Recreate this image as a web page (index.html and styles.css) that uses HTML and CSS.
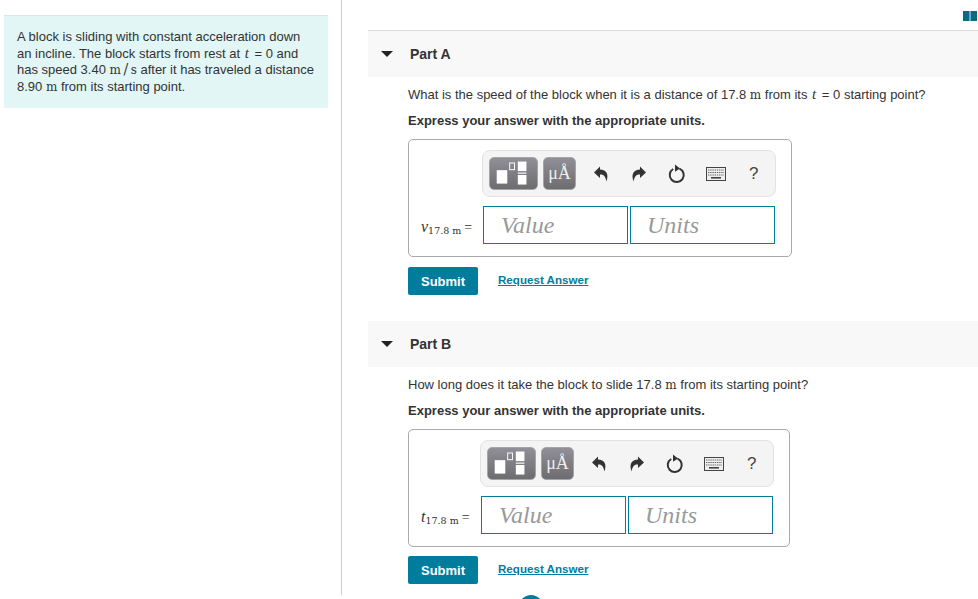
FILE: index.html
```html
<!DOCTYPE html>
<html lang="en">
<head>
  <meta charset="UTF-8">
  <title>Block on an incline</title>
  <link rel="stylesheet" href="styles.css">
</head>
<body>

  <div class="left">
    <div class="intro">
      A block is sliding with constant acceleration down an incline. The block starts from rest at <i class="var">t</i> <span class="eq">= 0</span> and has speed 3.40 <span class="unit">m<span class="slash">/</span>s</span> after it has traveled a distance 8.90 <span class="unit">m</span> from its starting point.
    </div>
  </div>

  <div class="right">
    <div class="topbar">
      <svg class="book" width="14" height="10" viewBox="0 0 14 10">
        <rect x="0" y="0" width="6" height="10" fill="#0b6a84"/>
        <rect x="8" y="0" width="6" height="10" fill="#0b6a84"/>
        <rect x="6" y="0" width="2" height="10" fill="#6fa9b9"/>
      </svg>
    </div>

    <div class="part-head part-head-first">
      <span class="caret"></span>
      <span class="part-title">Part A</span>
    </div>
    <div class="part-body">
      <p class="question">What is the speed of the block when it is a distance of 17.8 <span class="unit">m</span> from its <i class="var">t</i> <span class="eq">= 0</span> starting point?</p>
      <p class="express">Express your answer with the appropriate units.</p>

      <div class="answer-box">
        <div class="toolbar">
          <button class="tool-btn frac-btn">
            <svg width="49" height="32" viewBox="0 0 49 32">
              <rect x="7" y="12" width="11" height="14" fill="#fff"/>
              <rect x="20.5" y="4.5" width="5" height="7" fill="none" stroke="#fff"/>
              <rect x="29" y="3" width="9" height="10" fill="#fff"/>
              <rect x="29" y="14.5" width="9" height="1.2" fill="#fff"/>
              <rect x="29" y="17" width="9" height="10" fill="#fff"/>
            </svg>
          </button>
          <button class="tool-btn unit-btn">μÅ</button>
          <span class="tool">
            <svg width="16" height="16" viewBox="0 0 16 16"><path d="M7 0.5 L1 6.5 L7 12 V8.6 C10.2 8.4 12.5 10 13.5 15.5 C16 8 13.5 3.8 7 3.6 Z" fill="#333"/></svg>
          </span>
          <span class="tool">
            <svg class="flip" width="16" height="16" viewBox="0 0 16 16"><path d="M7 0.5 L1 6.5 L7 12 V8.6 C10.2 8.4 12.5 10 13.5 15.5 C16 8 13.5 3.8 7 3.6 Z" fill="#333"/></svg>
          </span>
          <span class="tool">
            <svg width="18" height="20" viewBox="0 0 18 20"><path d="M11.5 4.6 A7 7 0 1 1 5.2 5" fill="none" stroke="#333" stroke-width="2"/><path d="M7 0.6 L12 4.4 L7 7.8 Z" fill="#333"/></svg>
          </span>
          <span class="tool">
            <svg width="20" height="14" viewBox="0 0 20 14">
              <rect x="0.5" y="0.5" width="19" height="13" fill="#eee" stroke="#444"/>
              <path d="M2 3 H18 M2 5.5 H18 M2 8 H18" stroke="#666" stroke-width="1.2" stroke-dasharray="1.4 0.8"/>
              <rect x="5" y="10" width="10" height="1.6" fill="#444"/>
            </svg>
          </span>
          <span class="tool help">?</span>
        </div>
        <div class="answer-row">
          <span class="answer-label"><i>v</i><sub>17.8 m</sub>=</span>
          <input class="field field-value" placeholder="Value">
          <input class="field field-units" placeholder="Units">
        </div>
      </div>

      <div class="actions">
        <button class="submit">Submit</button>
        <a class="request" href="#">Request Answer</a>
      </div>
    </div>

    <div class="part-head">
      <span class="caret"></span>
      <span class="part-title">Part B</span>
    </div>
    <div class="part-body">
      <p class="question">How long does it take the block to slide 17.8 <span class="unit">m</span> from its starting point?</p>
      <p class="express">Express your answer with the appropriate units.</p>

      <div class="answer-box answer-box-b">
        <div class="toolbar">
          <button class="tool-btn frac-btn">
            <svg width="49" height="32" viewBox="0 0 49 32">
              <rect x="7" y="12" width="11" height="14" fill="#fff"/>
              <rect x="20.5" y="4.5" width="5" height="7" fill="none" stroke="#fff"/>
              <rect x="29" y="3" width="9" height="10" fill="#fff"/>
              <rect x="29" y="14.5" width="9" height="1.2" fill="#fff"/>
              <rect x="29" y="17" width="9" height="10" fill="#fff"/>
            </svg>
          </button>
          <button class="tool-btn unit-btn">μÅ</button>
          <span class="tool">
            <svg width="16" height="16" viewBox="0 0 16 16"><path d="M7 0.5 L1 6.5 L7 12 V8.6 C10.2 8.4 12.5 10 13.5 15.5 C16 8 13.5 3.8 7 3.6 Z" fill="#333"/></svg>
          </span>
          <span class="tool">
            <svg class="flip" width="16" height="16" viewBox="0 0 16 16"><path d="M7 0.5 L1 6.5 L7 12 V8.6 C10.2 8.4 12.5 10 13.5 15.5 C16 8 13.5 3.8 7 3.6 Z" fill="#333"/></svg>
          </span>
          <span class="tool">
            <svg width="18" height="20" viewBox="0 0 18 20"><path d="M11.5 4.6 A7 7 0 1 1 5.2 5" fill="none" stroke="#333" stroke-width="2"/><path d="M7 0.6 L12 4.4 L7 7.8 Z" fill="#333"/></svg>
          </span>
          <span class="tool">
            <svg width="20" height="14" viewBox="0 0 20 14">
              <rect x="0.5" y="0.5" width="19" height="13" fill="#eee" stroke="#444"/>
              <path d="M2 3 H18 M2 5.5 H18 M2 8 H18" stroke="#666" stroke-width="1.2" stroke-dasharray="1.4 0.8"/>
              <rect x="5" y="10" width="10" height="1.6" fill="#444"/>
            </svg>
          </span>
          <span class="tool help">?</span>
        </div>
        <div class="answer-row">
          <span class="answer-label"><i>t</i><sub>17.8 m</sub>=</span>
          <input class="field field-value" placeholder="Value">
          <input class="field field-units" placeholder="Units">
        </div>
      </div>

      <div class="actions actions-b">
        <button class="submit">Submit</button>
        <a class="request" href="#">Request Answer</a>
      </div>
      <div class="next-dot"></div>
    </div>
  </div>

</body>
</html>
```

FILE: styles.css
```css
html, body {
  height: 599px;
  overflow: hidden;
}

body {
  margin: 0;
  display: flex;
  align-items: flex-start;
  font-family: "Liberation Sans", Arial, sans-serif;
  font-size: 13px;
  color: #333;
  background-color: #fff;
}

.left {
  width: 341px;
  height: 595px;
  flex: none;
  border-right: 1px solid #c6cfda;
}

.intro {
  width: 324px;
  box-sizing: border-box;
  margin: 15px 0 0 4px;
  padding: 13px 10px 13px 13px;
  height: 93px;
  line-height: 16.7px;
  background-color: #e2f6f6;
  border-top: 1px solid #dbe5e6;
}

.var {
  font-family: "Liberation Serif", serif;
  font-size: 15px;
  line-height: 0;
  margin-left: 1px;
  margin-right: 2px;
}

.unit {
  font-family: "DejaVu Serif", serif;
  font-size: 12px;
  line-height: 0;
}

.slash {
  margin: 0 2.5px;
  font-size: 14px;
}

.eq {
  font-size: 13px;
}

.right {
  flex: 1;
  padding-left: 26px;
}

.topbar {
  height: 30px;
  display: flex;
  justify-content: flex-end;
  align-items: flex-start;
  padding-right: 1px;
}

.book {
  margin-top: 11px;
}

.part-head {
  height: 46px;
  display: flex;
  align-items: center;
  padding-left: 13px;
  background-color: #f8f8f8;
}

.part-head-first {
  border-top: 1px solid #dcdcdc;
}

/* second part heading sits under the first part */
.part-body + .part-head {
  margin-top: 26px;
}

.caret {
  width: 0;
  height: 0;
  border-left: 6px solid transparent;
  border-right: 6px solid transparent;
  border-top: 6px solid #222;
  margin-right: 17px;
}

.part-title {
  font-size: 14px;
  font-weight: bold;
  color: #333;
  margin-top: -1px;
}

.part-body {
  padding-left: 40px;
}

.question {
  margin: 9px 0 8px;
  line-height: 18px;
}

.express {
  margin: 8px 0 9px;
  line-height: 18px;
  font-weight: bold;
}

.answer-box {
  width: 384px;
  height: 118px;
  box-sizing: border-box;
  padding: 10px 15px 0 12px;
  border: 1px solid #aaa;
  border-radius: 5px;
}

.answer-box-b {
  width: 382px;
}

.toolbar {
  width: 294px;
  height: 47px;
  box-sizing: border-box;
  margin-left: auto;
  display: flex;
  align-items: center;
  padding-left: 6px;
  background-color: #f4f4f4;
  border: 1px solid #e2e2e2;
  border-radius: 8px;
}

.tool-btn {
  height: 33px;
  padding: 0;
  border: 1px solid #a5a5a8;
  border-radius: 5px;
  background: linear-gradient(#918f97, #6d6c6f);
  color: #fff;
}

.frac-btn {
  width: 49px;
  display: flex;
}

.unit-btn {
  width: 33px;
  margin-left: 5px;
  margin-right: 6px;
  font-family: "Liberation Serif", serif;
  font-size: 18px;
  color: #eee;
}

.tool {
  width: 38.2px;
  display: flex;
  justify-content: center;
  align-items: center;
}

.flip {
  transform: scaleX(-1);
}

.help {
  font-size: 17px;
  color: #444;
}

.answer-row {
  display: flex;
  align-items: center;
  margin-top: 9px;
  padding-right: 1px;
}

.answer-label {
  margin-right: auto;
  font-family: "Liberation Serif", serif;
  font-size: 14px;
  white-space: nowrap;
  padding-top: 3px;
}

.answer-label i {
  font-size: 16px;
}

.answer-label sub {
  font-family: "DejaVu Serif", serif;
  font-size: 9.5px;
  line-height: 0;
  vertical-align: -2px;
  margin-right: 3px;
}

.field {
  width: 145px;
  height: 38px;
  box-sizing: border-box;
  margin: 0;
  padding: 0 0 0 17px;
  border: 1px solid #007d99;
  border-radius: 0;
  background-color: #fff;
  font-family: "Liberation Serif", serif;
  font-style: italic;
  font-size: 24px;
}

.field::placeholder {
  color: #999;
  opacity: 1;
}

.field-value {
  margin-right: 2px;
}

.field-units {
  padding-left: 16px;
}

.actions {
  display: flex;
  align-items: center;
  margin-top: 10px;
}

.actions-b {
  margin-top: 9px;
}

.submit {
  width: 70px;
  height: 28px;
  padding: 0;
  border: none;
  border-radius: 2px;
  background-color: #007d9c;
  color: #fff;
  font-family: "Liberation Sans", Arial, sans-serif;
  font-size: 13px;
  font-weight: bold;
}

.request {
  margin-left: 20px;
  margin-bottom: 3px;
  font-size: 11.6px;
  font-weight: bold;
  color: #007da0;
}

.next-dot {
  width: 24px;
  height: 24px;
  margin: 11px 0 0 111px;
  border-radius: 50%;
  background-color: #007d9c;
}
```
